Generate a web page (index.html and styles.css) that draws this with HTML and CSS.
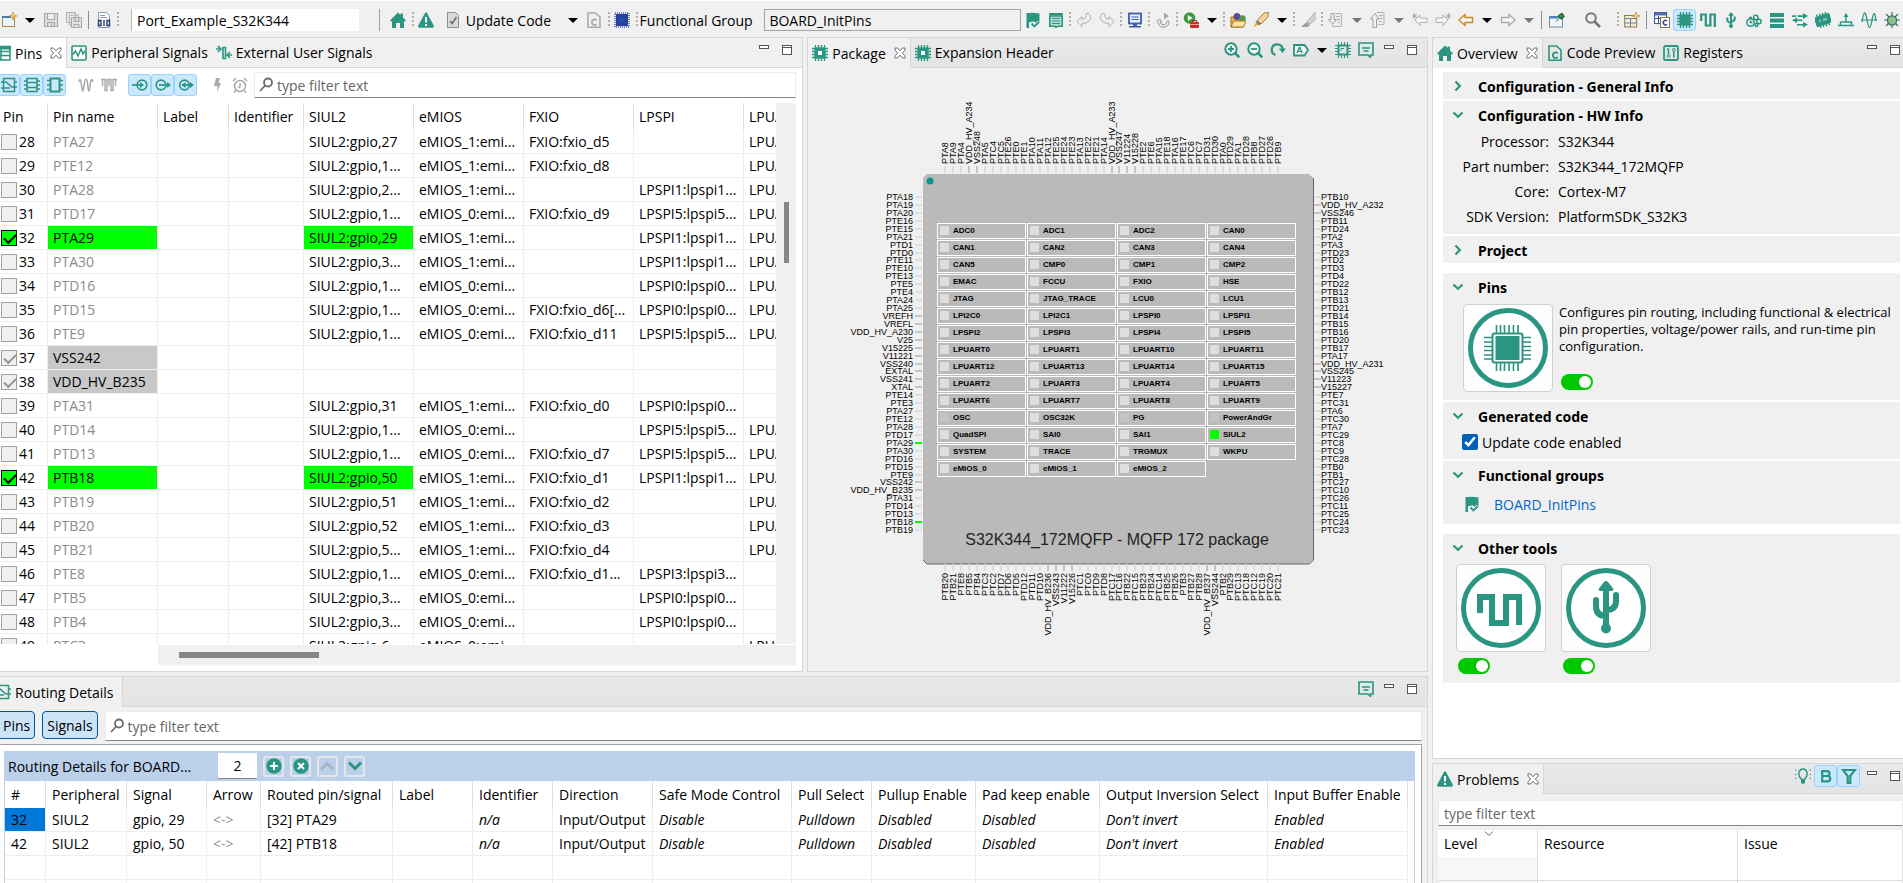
FILE: index.html
```
<!DOCTYPE html>
<html lang="en">
<head>
    <meta charset="UTF-8">
    <meta name="viewport" content="width=device-width, initial-scale=1.0">
    <title>Pins - Port_Example_S32K344</title>
    <link rel="stylesheet" href="styles.css">
</head>
<body>
    <!-- Icon sprite -->
    <svg class="sprite" aria-hidden="true">
        <symbol id="i-new" viewBox="0 0 16 16"><rect x="1.500" y="4.500" width="12" height="10" fill="#eaf6ff" stroke="#b08a3c"/><path d="M1 4h9v2H1z" fill="#4a78b5"/><path d="M12 0l1 3 3 1-3 1-1 3-1-3-3-1 3-1z" fill="#f3cf5b" stroke="#b88a1c" stroke-width=".6"/></symbol>
        <symbol id="i-save" viewBox="0 0 16 16"><path d="M1.500 1.500h13v13h-13zM4.500 1.500v6h7v-6M4.500 14.500v-4h7v4M8.500 11.500v3" fill="#e2e2e2" stroke="#a8a8a8" stroke-width="1.200"/></symbol>
        <symbol id="i-saveall" viewBox="0 0 16 16"><path d="M.5.5h9v10h-9zM3.500 3h9v10h-9z" fill="#e8e8e8" stroke="#b0b0b0"/><path d="M5.500 5.500h10v10h-10zM8 5.500v4h5v-4M8 15.500v-3h5v3" fill="#e2e2e2" stroke="#a8a8a8"/></symbol>
        <symbol id="i-bin" viewBox="0 0 16 16"><path d="M2.500.5h8l3 3v12h-11z" fill="#fff" stroke="#8a9ab5"/><path d="M4 3.500h5M4 5.500h7" stroke="#7f9bd0"/><g fill="none" stroke="#223a78" stroke-width="1.400"><path d="M2.500 8.500h2.500v5H2.500zM8 8v6M11 8.500h2.500v5H11z"/></g></symbol>
        <symbol id="i-home" viewBox="0 0 16 16"><path d="M0 8.500L8 .5l2.500 2.500V1.500h2.500v4L16 8.500l-1.200 1.200-.8-.8V16h-4v-5H6v5H2V8.900l-.8.8z" fill="#2a9580"/></symbol>
        <symbol id="i-warn" viewBox="0 0 16 16"><path d="M7 1q1-1.500 2 0l7 13q0 1.800-1.500 1.800h-13Q0 15.800 0 14z" fill="#2a9580"/><path d="M8 5v5.500M8 12v2" stroke="#fff" stroke-width="2"/></symbol>
        <symbol id="i-update" viewBox="0 0 16 16"><path d="M2.500.5h8l3 3v12h-11z" fill="#d9d9d9" stroke="#8f8f8f"/><path d="M5 9l2.200 2.500L11.500 5" fill="none" stroke="#666" stroke-width="1.400"/></symbol>
        <symbol id="i-cdoc" viewBox="0 0 16 16"><path d="M2 1h7.500L14 5v10.200H2z" fill="none" stroke="currentColor" stroke-width="1.600"/><path d="M10.700 8.300a2.800 2.800 0 1 0 0 3.900" fill="none" stroke="currentColor" stroke-width="1.800"/></symbol>
        <symbol id="i-bluechip" viewBox="0 0 16 16"><path d="M1 1h14v14H1z" fill="none" stroke="#6d7fc4" stroke-width="2" stroke-dasharray="1 1"/><rect x="2" y="2" width="12" height="12" fill="#2c3f97"/><rect x="5" y="5" width="6" height="6" fill="#1d4fae"/></symbol>
        <symbol id="i-flag" viewBox="0 0 16 16"><path d="M1.500 1H4q5-.5 10.500.5V9.500L12 12 9 9.500q-3 0-5 1V16H1.500z" fill="#2a9580"/><path d="M6.500 11.500l3 3 4.500-4.500" fill="none" stroke="#f4f4f4" stroke-width="3.600"/><path d="M6.500 11.500l3 3 4.500-4.500" fill="none" stroke="#2a9580" stroke-width="1.800"/></symbol>
        <symbol id="i-list" viewBox="0 0 16 16"><rect x="1" y="1" width="14" height="2.500" rx="1" fill="#2a9580"/><path d="M1.800 4h12.400v10.200H10L8 15.500l-1-1.300H1.800z" fill="#b9dcd4" stroke="#2a9580" stroke-width="1.600"/><path d="M4 6.500h8M4 9h8M4 11.500h8" stroke="#2a9580"/></symbol>
        <symbol id="i-undo" viewBox="0 0 16 16"><path d="M.8 9.500L6 4.500v2.800Q10.500 7 10 2l2.500-.8Q16.500 5.500 13 9q-2.500 2.500-7 2.500v3z" fill="#efefef" stroke="#b0b0b0"/></symbol>
        <symbol id="i-redo" viewBox="0 0 16 16"><path d="M15.200 9.500L10 4.500v2.800Q5.500 7 6 2l-2.500-.8Q-.5 5.500 3 9q2.500 2.500 7 2.500v3z" fill="#efefef" stroke="#b0b0b0"/></symbol>
        <symbol id="i-monitor" viewBox="0 0 16 16"><rect x="2" y="1.500" width="12" height="10" fill="#e9f0fb" stroke="#3a5fa8" stroke-width="1.800"/><path d="M4.500 5h7M4.500 7.500h7" stroke="#3a5fa8"/><path d="M6 12h4v2h4v1.500H2V14h4z" fill="#3a5fa8"/></symbol>
        <symbol id="i-refresh" viewBox="0 0 16 16"><path d="M9 .5l5 3.500-5 3.500z" fill="#9aa89c"/><path d="M2 9l3-2 1.500 3.500-1.500-.3q1 3 4 2.600t3-3.700h2q.5 5-4.500 6T3 10.500z" fill="#eee" stroke="#999"/></symbol>
        <symbol id="i-run" viewBox="0 0 16 16"><circle cx="6.500" cy="6" r="5.800" fill="#3c9a3c"/><path d="M4.800 3l5 3-5 3z" fill="#fff"/><rect x="7" y="10" width="9" height="6" rx="1" fill="#cc2d28"/><path d="M9.500 10V8.500h4V10" fill="none" stroke="#a01d1a"/><path d="M7 12.500h9" stroke="#f2a09d"/></symbol>
        <symbol id="i-folder" viewBox="0 0 16 16"><path d="M1 5h5v2h8l-1 8H1z" fill="#e8b64c" stroke="#a8761b"/><circle cx="7" cy="4.500" r="3.500" fill="#5b4a96"/><circle cx="12.500" cy="6.500" r="3.200" fill="#4a9a53"/><path d="M3.500 9H16l-2.500 6H1z" fill="#fbe3a0" stroke="#a8761b"/></symbol>
        <symbol id="i-rocket" viewBox="0 0 16 16"><path d="M4 8.500L11 1l4.500-.5L15 5l-7 7z" fill="#f4d49c" stroke="#a77c33"/><path d="M4 8.500l4 3.500-2 1.500L2.500 10z" fill="#7a7a86"/><path d="M3 10.500l2.500 2L.5 15.500z" fill="#f2a724"/></symbol>
        <symbol id="i-brush" viewBox="0 0 16 16"><path d="M15 0v8l-5 4-3-2.500z" fill="#d3d3d3" stroke="#b5b5b5"/><path d="M6.500 10L10 12.500l-2 2.500H1z" fill="#a0a0a0"/></symbol>
        <symbol id="i-docdown" viewBox="0 0 16 16"><path d="M7.500 1.500h6v13h-9V12" fill="#ededed" stroke="#b4b4b4"/><path d="M8 4.500h4M9 7.500h3M10 10.500h2" stroke="#b4b4b4"/><path d="M3 1.500h3v6h2.500l-4 4.500L.5 7.500H3z" fill="#f3f3f3" stroke="#9f9f9f"/></symbol>
        <symbol id="i-docup" viewBox="0 0 16 16"><path d="M7 .5h7v12H8" fill="#ededed" stroke="#b4b4b4"/><path d="M9 3.500h4M9 6.500h4M9 9.500h3" stroke="#b4b4b4"/><path d="M3 15.500V7H.5L5 1.500 9 7H6.500v8.500z" fill="#f3f3f3" stroke="#9f9f9f"/></symbol>
        <symbol id="i-left" viewBox="0 0 16 16"><path d="M1 8l6-5.500v3h7.500v5H7v3z" fill="#f6f6f6" stroke="currentColor" stroke-width="1.300"/></symbol>
        <symbol id="i-right" viewBox="0 0 16 16"><path d="M15 8L9 2.500v3H1.500v5H9v3z" fill="#f6f6f6" stroke="currentColor" stroke-width="1.300"/></symbol>
        <symbol id="i-leftstar" viewBox="0 0 16 16"><path d="M3 8l5-5v3h7v4.500H8v3z" fill="#f6f6f6" stroke="#b0b0b0"/><path d="M2.500 1v6M0 2.500l5 3M5 2.500l-5 3" stroke="#999" stroke-width=".8"/></symbol>
        <symbol id="i-rightstar" viewBox="0 0 16 16"><path d="M13 8L8 3v3H1v4.500h7v3z" fill="#f6f6f6" stroke="#b0b0b0"/><path d="M13.500 1v6M11 2.500l5 3M16 2.500l-5 3" stroke="#999" stroke-width=".8"/></symbol>
        <symbol id="i-pinwin" viewBox="0 0 16 16"><rect x=".5" y="4.500" width="13" height="10.500" fill="#eef5fb" stroke="#7c8aa0"/><path d="M.5 4h13v2.500H.5z" fill="#4d83c4"/><path d="M7 9.500l3-3M9 4l3.500 3.500 3-3L13 1z" fill="#2c8a3e" stroke="#1f5f2c"/></symbol>
        <symbol id="i-search" viewBox="0 0 16 16"><circle cx="6" cy="6" r="4.800" fill="none" stroke="#777" stroke-width="2"/><path d="M9.500 9.500l5.500 5.500" stroke="#777" stroke-width="2.600"/></symbol>
        <symbol id="i-persp" viewBox="0 0 16 16"><rect x=".7" y="3.500" width="12" height="11.500" fill="#f7edd3" stroke="#8c7a4c"/><path d="M1 6.500h11.500M6.500 6.500V15M1 11h11.500" stroke="#6d7fa8"/><path d="M12 0l1 3 3 1-3 1-1 3-1-3-3-1 3-1z" fill="#f6d779" stroke="#a8812a" stroke-width=".6"/></symbol>
        <symbol id="i-cwin" viewBox="0 0 16 16"><rect x=".6" y=".6" width="12" height="11" fill="#fff" stroke="#35508c"/><path d="M1 1h11v2.500H1z" fill="#4a70b8"/><path d="M4.500 4v7M1 6.500h7" stroke="#35508c"/><rect x="6.500" y="5.500" width="9" height="10" fill="#fff" stroke="#8a7340"/><path d="M13 9a2.200 2.200 0 1 0 0 3.200" fill="none" stroke="#2b4c9c" stroke-width="1.500"/></symbol>
        <symbol id="i-chip" viewBox="0 0 16 16"><path d="M3.500 0v16M6.500 0v16M9.500 0v16M12.500 0v16M0 3.500h16M0 6.500h16M0 9.500h16M0 12.500h16" stroke="#2a9580" stroke-width="1.300"/><rect x="2.500" y="2.500" width="11" height="11" rx="1" fill="#2a9580"/></symbol>
        <symbol id="i-chiphole" viewBox="0 0 16 16"><path d="M3.500 0v16M6.500 0v16M9.500 0v16M12.500 0v16M0 3.500h16M0 6.500h16M0 9.500h16M0 12.500h16" stroke="#2a9580" stroke-width="1.300"/><rect x="2.500" y="2.500" width="11" height="11" rx="1.500" fill="#2a9580"/><rect x="6" y="6" width="4" height="4" fill="#fff"/></symbol>
        <symbol id="i-chiprot" viewBox="0 0 16 16"><path d="M3.500 0v16M6.500 0v16M9.500 0v16M12.500 0v16M0 3.500h16M0 6.500h16M0 9.500h16M0 12.500h16" stroke="#2a9580"/><rect x="3.500" y="3.500" width="9" height="9" fill="#e6e6e6" stroke="#2a9580" stroke-width="2"/><path d="M6 9V6.500h3" fill="none" stroke="#2a9580"/></symbol>
        <symbol id="i-wave" viewBox="0 0 16 16"><path d="M1.200 9V2.500h4.600v11h4.600v-11h4.400V15" fill="none" stroke="#2a9580" stroke-width="2.200"/></symbol>
        <symbol id="i-usb" viewBox="0 0 16 16"><path d="M8 3v10M4.300 5.500V8q.2 2.300 3.700 2.800M11.700 4.500V7q-.2 2.300-3.700 2.800" fill="none" stroke="#2a9580" stroke-width="2"/><path d="M8 0l3 3.800H5z" fill="#2a9580"/><circle cx="8" cy="14" r="2" fill="#2a9580"/></symbol>
        <symbol id="i-clocks" viewBox="0 0 16 16"><g fill="none" stroke="#2a9580" stroke-width="1.500"><circle cx="4.500" cy="10.500" r="3.700"/><circle cx="9.800" cy="5.500" r="2.200"/><circle cx="13" cy="9.500" r="2.200"/><circle cx="10.500" cy="13" r="1.500"/><path d="M3 5.500h3M4.500 8.500v2h2"/></g></symbol>
        <symbol id="i-bars" viewBox="0 0 16 16"><path d="M1 1h14v4H1zM1 6.500h14v4H1zM1 12h14v4H1z" fill="#2a9580"/></symbol>
        <symbol id="i-swap" viewBox="0 0 16 16"><path d="M11 1l5 3-5 3V5H6L5 3.200h6zM5 5.500v2h5.500V9H5v2L0 8.200zM11 10l5 2.500-5 3v-2H5V12h6zM0 3.300h4V5H0z" fill="#2a9580"/></symbol>
        <symbol id="i-chiptilt" viewBox="0 0 16 16"><g transform="rotate(-18 8 8)"><path d="M3.500 1v14M6.500 1v14M9.500 1v14M12.500 1v14" stroke="#2a9580" stroke-width="1.500"/><rect x="0" y="3" width="16" height="10" fill="#2a9580"/><path d="M4 8h2M8 8h4" stroke="#8fc7bb" stroke-width="2"/></g></symbol>
        <symbol id="i-ddr" viewBox="0 0 16 16"><path d="M0 13.500h16M2.500 10h11v3.500M2.500 10v3.500M8 4v6" fill="none" stroke="#2a9580" stroke-width="1.400"/><path d="M8 1l2.500 4h-5z" fill="#2a9580"/></symbol>
        <symbol id="i-sine" viewBox="0 0 16 16"><path d="M0 8h16" stroke="#2a9580"/><path d="M1 10Q3.500-7 6 8t5 0Q13.500-5 15 9" fill="none" stroke="#2a9580" stroke-width="1.300"/></symbol>
        <symbol id="i-bug" viewBox="0 0 16 16"><path d="M2 2l12 12M14 2L2 14M0 8h16M8 0v16" stroke="#35706a" stroke-width="1.200"/><circle cx="8" cy="8.500" r="4.600" fill="#8fbf8a" stroke="#35706a" stroke-width="1.200"/></symbol>
        <symbol id="i-x" viewBox="0 0 12 12"><path d="M1 1h2.500L6 3.800 8.500 1H11v2.200L8.300 6 11 8.800V11H8.500L6 8.200 3.500 11H1V8.800L3.700 6 1 3.200z" fill="#fff" stroke="#6e6e6e"/></symbol>
        <symbol id="i-min" viewBox="0 0 12 12"><rect x="1.500" y="1.500" width="9" height="3" fill="#fff" stroke="#555"/></symbol>
        <symbol id="i-max" viewBox="0 0 12 12"><rect x="1.500" y="1.500" width="9" height="9" fill="#fff" stroke="#555"/><path d="M1 3.500h10" stroke="#555"/></symbol>
        <symbol id="i-table" viewBox="0 0 16 16"><path d="M1 1.500h14v13.500H1zM1 6.500h14M1 10.500h14M6 3v12" fill="#fff" stroke="#2a9580" stroke-width="1.500"/><path d="M0 1h16v3.500H0z" fill="#2a9580"/></symbol>
        <symbol id="i-graph" viewBox="0 0 16 16"><rect x="1" y="1" width="14" height="14" rx="1" fill="#fff" stroke="#2a9580" stroke-width="1.600"/><path d="M2 9.500l2.500-3.500 2.500 5 3-7 2 5 2-3" fill="none" stroke="#2a9580" stroke-width="1.500"/></symbol>
        <symbol id="i-ext" viewBox="0 0 16 16"><path d="M0 4h3.500M2 1l3 3-3 3M7 2.500v11h2.500v-11zM11.500 10H16M14 7l-3 3 3 3" fill="none" stroke="#2a9580" stroke-width="1.600"/></symbol>
        <symbol id="i-regs" viewBox="0 0 16 16"><rect x="1" y="1" width="14" height="14" rx="1.500" fill="none" stroke="#2a9580" stroke-width="1.800"/><path d="M5.500 3.500v6M10.800 6v6.500M4 4.500L5.500 3.500" fill="none" stroke="#2a9580" stroke-width="1.500"/><circle cx="5.500" cy="11" r="1.400" fill="none" stroke="#2a9580"/><circle cx="10.800" cy="4.800" r="1.400" fill="none" stroke="#2a9580"/></symbol>
        <symbol id="i-route" viewBox="0 0 16 16"><path d="M2.500 1.500h11v13h-11zM0 5h5l6 5h5M0 11h9M0 5h3M13 5h3" fill="none" stroke="#2a9580" stroke-width="1.500"/></symbol>
        <symbol id="i-pkg2" viewBox="0 0 16 16"><path d="M3 1.500h10v13H3zM0 4h3M0 8h3M0 12h3M13 4h3M13 8h3M13 12h3M3 5.500h10M3 10.500h10" fill="none" stroke="#2a9580" stroke-width="1.600"/></symbol>
        <symbol id="i-pkg3" viewBox="0 0 16 16"><path d="M3.500 1.500h9v13h-9z" fill="none" stroke="#2a9580" stroke-width="2"/><path d="M0 3.500h3M0 8h3M0 12.500h3M13 3.500h3M13 8h3M13 12.500h3" stroke="#2a9580" stroke-width="1.500"/></symbol>
        <symbol id="i-analog" viewBox="0 0 16 16"><path d="M1 5q1-5 2 0l1 7q.7 4 1.400 0l1.400-8q1.200-4 2.400 0l1 8q.7 4 1.400 0l1.200-8q1-3.500 2.200 1" fill="none" stroke="#aaa" stroke-width="1.500"/></symbol>
        <symbol id="i-digital" viewBox="0 0 16 16"><path d="M0 2.500h4v11h2v-11h4v11h2v-11h4M1.500 3v6M8 3v6M14.500 3v6" fill="none" stroke="#aaa" stroke-width="1.400"/></symbol>
        <symbol id="i-in" viewBox="0 0 16 16"><circle cx="10" cy="8" r="4.800" fill="none" stroke="#2a9580" stroke-width="1.700"/><path d="M0 8h9" stroke="#2a9580" stroke-width="1.700"/><path d="M8 5l4 3-4 3z" fill="#2a9580"/></symbol>
        <symbol id="i-out" viewBox="0 0 16 16"><circle cx="6" cy="8" r="4.800" fill="none" stroke="#2a9580" stroke-width="1.700"/><path d="M4 8h10" stroke="#2a9580" stroke-width="1.700"/><path d="M12 5l4 3-4 3z" fill="#2a9580"/></symbol>
        <symbol id="i-inout" viewBox="0 0 16 16"><circle cx="6.500" cy="8" r="4.800" fill="none" stroke="#2a9580" stroke-width="1.700"/><path d="M4 8h10" stroke="#2a9580" stroke-width="1.700"/><path d="M12 5l4 3-4 3zM7.500 5l-4 3 4 3z" fill="#2a9580"/></symbol>
        <symbol id="i-bolt" viewBox="0 0 16 16"><path d="M7 1h4L9.500 6H12l-4 9 .5-6H5z" fill="#aaa"/></symbol>
        <symbol id="i-alarm" viewBox="0 0 16 16"><circle cx="8" cy="9" r="5.500" fill="none" stroke="#aaa" stroke-width="1.500"/><path d="M8 6v3.500L6 11M1 4l3-3M15 4l-3-3M3.500 13.500L2 15.500M12.500 13.500l1.500 2" fill="none" stroke="#aaa" stroke-width="1.500"/></symbol>
        <symbol id="i-lens" viewBox="0 0 16 16"><circle cx="10" cy="5.500" r="4" fill="none" stroke="#6a6a6a" stroke-width="1.800"/><path d="M7.200 8.500L2 14" stroke="#6a6a6a" stroke-width="1.800"/></symbol>
        <symbol id="i-zoomin" viewBox="0 0 16 16"><circle cx="7" cy="7" r="5.700" fill="#f4f4f4" stroke="#2a9580" stroke-width="2"/><path d="M4 7h6M7 4v6" stroke="#2a9580" stroke-width="1.800"/><path d="M11 11l4.300 4.300" stroke="#2a9580" stroke-width="2.600"/></symbol>
        <symbol id="i-zoomout" viewBox="0 0 16 16"><circle cx="7" cy="7" r="5.700" fill="#f4f4f4" stroke="#2a9580" stroke-width="2"/><path d="M4 7h6" stroke="#2a9580" stroke-width="1.800"/><path d="M11 11l4.300 4.300" stroke="#2a9580" stroke-width="2.600"/></symbol>
        <symbol id="i-rotate" viewBox="0 0 16 16"><path d="M5.500 13A5.500 5.500 0 1 1 12.700 7" fill="none" stroke="#2a9580" stroke-width="2.200"/><path d="M8.800 6.500H16L12.400 11z" fill="#2a9580"/></symbol>
        <symbol id="i-tag" viewBox="0 0 16 16"><path d="M1 3h10.500L15 8l-3.500 5.500H1z" fill="#f4f4f4" stroke="#2a9580" stroke-width="1.800"/><path d="M4 11l2.300-5.500h.6L9 11M5 9.300h3.200" fill="none" stroke="#2a9580" stroke-width="1.300"/></symbol>
        <symbol id="i-note" viewBox="0 0 16 16"><path d="M1 1h14v12h-2.500v2.500L10 13H1z" fill="#dcece8" stroke="#2a9580" stroke-width="1.600"/><path d="M4 6h8M5.500 9h5" stroke="#2a9580" stroke-width="1.600"/></symbol>
        <symbol id="i-bulb" viewBox="0 0 16 16"><path d="M6.500 11.500Q3.600 8.500 3.800 5.500 4.500 1 8 1t4.200 4.500q.2 3-2.700 6z" fill="none" stroke="#2a9580" stroke-width="1.400"/><path d="M6 11h4v4l-2 1-2-1z" fill="#2a9580"/><path d="M0 1.500l1.500 1M0 6.500h1.500M0 11l1.500-1M16 1.500l-1.500 1M16 6.500h-1.500M16 11l-1.500-1" stroke="#2a9580"/></symbol>
        <symbol id="i-b" viewBox="0 0 16 16"><path d="M4.200 3.200h4.600q2.800.2 2.800 2.300T9 8H4.500 9.300q3 .2 3 2.700t-3 2.600H4.200z" fill="none" stroke="#2a9580" stroke-width="2.200"/></symbol>
        <symbol id="i-funnel" viewBox="0 0 16 16"><path d="M2 2h12L9.300 8v7H6.700V8z" fill="#cce8ff" stroke="#2a9580" stroke-width="2.200"/></symbol>
        <symbol id="i-down" viewBox="0 0 12 12"><path d="M1.500 3.500L6 7.800l4.500-4.300" fill="none" stroke="currentColor" stroke-width="2.200"/></symbol>
        <symbol id="i-add" viewBox="0 0 16 16"><circle cx="8" cy="8" r="7.700" fill="#2a9580"/><path d="M8 4v8M4 8h8" stroke="#fff" stroke-width="2"/></symbol>
        <symbol id="i-del" viewBox="0 0 16 16"><circle cx="8" cy="8" r="7.700" fill="#2a9580"/><path d="M5 5l6 6M11 5l-6 6" stroke="#fff" stroke-width="2"/></symbol>
    </svg>

    <div class="toolbar" id="mainToolbar">
        <button class="tool" aria-label="New"><svg><use href="#i-new"/></svg></button>
        <button class="arrow" aria-label="New menu"></button>
        <button class="tool" aria-label="Save"><svg><use href="#i-save"/></svg></button>
        <button class="tool" aria-label="Save all"><svg><use href="#i-saveall"/></svg></button>
        <i class="sep"></i>
        <button class="tool" aria-label="Binary"><svg><use href="#i-bin"/></svg></button>
        <i class="dots"></i>
        <select class="project-select" aria-label="Project"><option>Port_Example_S32K344</option></select>
        <button class="tool" aria-label="Home"><svg><use href="#i-home"/></svg></button>
        <i class="dots"></i>
        <button class="tool" aria-label="Problems"><svg><use href="#i-warn"/></svg></button>
        <button class="text-tool"><svg><use href="#i-update"/></svg>Update Code</button>
        <button class="arrow" aria-label="Update menu"></button>
        <button class="tool grey" aria-label="Code"><svg><use href="#i-cdoc"/></svg></button>
        <i class="dots"></i>
        <button class="tool" aria-label="Processor"><svg><use href="#i-bluechip"/></svg></button>
        <i class="dots"></i>
        <label class="group-label" for="groupSelect">Functional Group</label>
        <select class="group-select" id="groupSelect"><option>BOARD_InitPins</option></select>
        <button class="tool" aria-label="Called from default init"><svg><use href="#i-flag"/></svg></button>
        <button class="tool" aria-label="Group properties"><svg><use href="#i-list"/></svg></button>
        <i class="dots"></i>
        <button class="tool" aria-label="Undo"><svg><use href="#i-undo"/></svg></button>
        <button class="tool" aria-label="Redo"><svg><use href="#i-redo"/></svg></button>
        <i class="dots"></i>
        <button class="tool" aria-label="Console"><svg><use href="#i-monitor"/></svg></button>
        <i class="dots"></i>
        <button class="tool" aria-label="Restart"><svg><use href="#i-refresh"/></svg></button>
        <i class="dots"></i>
        <button class="tool" aria-label="Run"><svg><use href="#i-run"/></svg></button>
        <button class="arrow" aria-label="Run menu"></button>
        <i class="dots"></i>
        <button class="tool" aria-label="Open element"><svg><use href="#i-folder"/></svg></button>
        <button class="tool" aria-label="Launch"><svg><use href="#i-rocket"/></svg></button>
        <button class="arrow" aria-label="Launch menu"></button>
        <i class="dots"></i>
        <button class="tool" aria-label="Mark"><svg><use href="#i-brush"/></svg></button>
        <i class="dots"></i>
        <button class="tool" aria-label="Next annotation"><svg><use href="#i-docdown"/></svg></button>
        <button class="arrow dim" aria-label="Next menu"></button>
        <button class="tool" aria-label="Previous annotation"><svg><use href="#i-docup"/></svg></button>
        <button class="arrow dim" aria-label="Previous menu"></button>
        <button class="tool" aria-label="Last edit"><svg><use href="#i-leftstar"/></svg></button>
        <button class="tool" aria-label="Next edit"><svg><use href="#i-rightstar"/></svg></button>
        <button class="tool gold" aria-label="Back"><svg><use href="#i-left"/></svg></button>
        <button class="arrow" aria-label="Back menu"></button>
        <button class="tool grey" aria-label="Forward"><svg><use href="#i-right"/></svg></button>
        <button class="arrow dim" aria-label="Forward menu"></button>
        <i class="sep"></i>
        <button class="tool" aria-label="Pin editor"><svg><use href="#i-pinwin"/></svg></button>
        <button class="tool spaced" aria-label="Search"><svg><use href="#i-search"/></svg></button>
        <i class="dots"></i>
        <button class="tool" aria-label="Open perspective"><svg><use href="#i-persp"/></svg></button>
        <i class="sep"></i>
        <button class="tool" aria-label="C/C++"><svg><use href="#i-cwin"/></svg></button>
        <button class="tool on" aria-label="Pins"><svg><use href="#i-chip"/></svg></button>
        <button class="tool" aria-label="Clocks"><svg><use href="#i-wave"/></svg></button>
        <button class="tool" aria-label="Peripherals"><svg><use href="#i-usb"/></svg></button>
        <button class="tool" aria-label="GTM"><svg><use href="#i-clocks"/></svg></button>
        <button class="tool" aria-label="IVT"><svg><use href="#i-bars"/></svg></button>
        <button class="tool" aria-label="QuadSPI"><svg><use href="#i-swap"/></svg></button>
        <button class="tool" aria-label="DCD"><svg><use href="#i-chiptilt"/></svg></button>
        <button class="tool" aria-label="DDR"><svg><use href="#i-ddr"/></svg></button>
        <button class="tool" aria-label="eFUSE"><svg><use href="#i-sine"/></svg></button>
        <button class="tool" aria-label="Debug"><svg><use href="#i-bug"/></svg></button>
    </div>

    <div class="workspace">
        <div class="main-col">
            <div class="top-row">
                <!-- Pins view -->
                <section class="view pins-view">
                    <div class="tabs light">
                        <button class="tab active first"><svg><use href="#i-table"/></svg>Pins<svg class="close"><use href="#i-x"/></svg></button>
                        <button class="tab"><svg><use href="#i-graph"/></svg>Peripheral Signals</button>
                        <button class="tab"><svg><use href="#i-ext"/></svg>External User Signals</button>
                        <div class="view-tools">
                            <button class="win" aria-label="Minimize"><svg><use href="#i-min"/></svg></button>
                            <button class="win" aria-label="Maximize"><svg><use href="#i-max"/></svg></button>
                        </div>
                    </div>
                    <div class="pin-tools">
                        <div class="tool-set edge">
                            <button class="tool on" aria-label="Show routed"><svg><use href="#i-route"/></svg></button>
                            <button class="tool on" aria-label="Show dedicated"><svg><use href="#i-pkg2"/></svg></button>
                            <button class="tool on" aria-label="Show package"><svg><use href="#i-pkg3"/></svg></button>
                        </div>
                        <div class="tool-set">
                            <button class="tool" aria-label="Analog"><svg><use href="#i-analog"/></svg></button>
                            <button class="tool" aria-label="Digital"><svg><use href="#i-digital"/></svg></button>
                        </div>
                        <div class="tool-set">
                            <button class="tool on" aria-label="Inputs"><svg><use href="#i-in"/></svg></button>
                            <button class="tool on" aria-label="Outputs"><svg><use href="#i-out"/></svg></button>
                            <button class="tool on" aria-label="Bidirectional"><svg><use href="#i-inout"/></svg></button>
                        </div>
                        <div class="tool-set">
                            <button class="tool" aria-label="Power"><svg><use href="#i-bolt"/></svg></button>
                            <button class="tool" aria-label="Clock"><svg><use href="#i-alarm"/></svg></button>
                        </div>
                        <div class="filter">
                            <svg><use href="#i-lens"/></svg>
                            <input type="text" placeholder="type filter text" aria-label="Filter pins">
                        </div>
                    </div>
                    <div class="pin-body">
                        <div class="pin-scroll">
                            <table class="pin-table">
                                <colgroup><col class="c-pin"><col class="c-sig"><col class="c-label"><col class="c-ident"><col class="c-sig"><col class="c-sig"><col class="c-sig"><col class="c-sig"><col class="c-sig"></colgroup>
                                <thead>
                                    <tr><th>Pin</th><th>Pin name</th><th>Label</th><th>Identifier</th><th>SIUL2</th><th>eMIOS</th><th>FXIO</th><th>LPSPI</th><th>LPUART</th></tr>
                                </thead>
                                <tbody id="pinRows"></tbody>
                            </table>
                        </div>
                        <div class="vbar"><div class="vthumb"></div></div>
                    </div>
                    <div class="hbar"><div class="hthumb"></div></div>
                </section>

                <!-- Package view -->
                <section class="view package-view">
                    <div class="tabs">
                        <button class="tab active"><svg><use href="#i-chiphole"/></svg>Package<svg class="close"><use href="#i-x"/></svg></button>
                        <button class="tab"><svg><use href="#i-chiphole"/></svg>Expansion Header</button>
                        <div class="view-tools">
                            <button class="tool" aria-label="Zoom in"><svg><use href="#i-zoomin"/></svg></button>
                            <button class="tool" aria-label="Zoom out"><svg><use href="#i-zoomout"/></svg></button>
                            <button class="tool" aria-label="Rotate"><svg><use href="#i-rotate"/></svg></button>
                            <button class="tool" aria-label="Labels"><svg><use href="#i-tag"/></svg></button>
                            <button class="arrow" aria-label="Labels menu"></button>
                            <button class="tool" aria-label="Switch package"><svg><use href="#i-chiprot"/></svg></button>
                            <button class="tool" aria-label="Legend"><svg><use href="#i-note"/></svg></button>
                            <button class="win" aria-label="Minimize"><svg><use href="#i-min"/></svg></button>
                            <button class="win" aria-label="Maximize"><svg><use href="#i-max"/></svg></button>
                        </div>
                    </div>
                    <div class="package-body">
                        <svg class="package" id="package" viewBox="0 0 560 560"></svg>
                    </div>
                </section>
            </div>

            <!-- Routing details -->
            <section class="view routing-view">
                <div class="tabs">
                    <button class="tab active first"><svg><use href="#i-route"/></svg>Routing Details</button>
                    <div class="view-tools">
                        <button class="tool" aria-label="Legend"><svg><use href="#i-note"/></svg></button>
                        <button class="win" aria-label="Minimize"><svg><use href="#i-min"/></svg></button>
                        <button class="win" aria-label="Maximize"><svg><use href="#i-max"/></svg></button>
                    </div>
                </div>
                <div class="routing-tools">
                    <button class="toggle-btn cut">Pins</button>
                    <button class="toggle-btn">Signals</button>
                    <div class="filter">
                        <svg><use href="#i-lens"/></svg>
                        <input type="text" placeholder="type filter text" aria-label="Filter routing">
                    </div>
                </div>
                <div class="routing-box">
                    <div class="routing-head">
                        <span class="routing-title">Routing Details for BOARD...</span>
                        <input class="count" type="text" value="2" aria-label="Row count">
                        <button class="mini" aria-label="Add"><svg><use href="#i-add"/></svg></button>
                        <button class="mini" aria-label="Remove"><svg><use href="#i-del"/></svg></button>
                        <button class="mini up" aria-label="Move up"><svg><use href="#i-down"/></svg></button>
                        <button class="mini" aria-label="Move down"><svg><use href="#i-down"/></svg></button>
                    </div>
                    <div class="routing-scroll">
                        <table class="routing-table">
                            <colgroup><col class="r1"><col class="r2"><col class="r3"><col class="r4"><col class="r5"><col class="r3"><col class="r3"><col class="r6"><col class="r7"><col class="r3"><col class="r8"><col class="r9"><col class="r10"><col class="r11"></colgroup>
                            <thead>
                                <tr><th>#</th><th>Peripheral</th><th>Signal</th><th>Arrow</th><th>Routed pin/signal</th><th>Label</th><th>Identifier</th><th>Direction</th><th>Safe Mode Control</th><th>Pull Select</th><th>Pullup Enable</th><th>Pad keep enable</th><th>Output Inversion Select</th><th>Input Buffer Enable</th></tr>
                            </thead>
                            <tbody>
                                <tr><td class="selected">32</td><td>SIUL2</td><td>gpio, 29</td><td class="dir">&lt;-&gt;</td><td>[32] PTA29</td><td></td><td><em>n/a</em></td><td>Input/Output</td><td><em>Disable</em></td><td><em>Pulldown</em></td><td><em>Disabled</em></td><td><em>Disabled</em></td><td><em>Don't invert</em></td><td><em>Enabled</em></td></tr>
                                <tr><td>42</td><td>SIUL2</td><td>gpio, 50</td><td class="dir">&lt;-&gt;</td><td>[42] PTB18</td><td></td><td><em>n/a</em></td><td>Input/Output</td><td><em>Disable</em></td><td><em>Pulldown</em></td><td><em>Disabled</em></td><td><em>Disabled</em></td><td><em>Don't invert</em></td><td><em>Enabled</em></td></tr>
                                <tr><td></td><td></td><td></td><td></td><td></td><td></td><td></td><td></td><td></td><td></td><td></td><td></td><td></td><td></td></tr>
                                <tr><td></td><td></td><td></td><td></td><td></td><td></td><td></td><td></td><td></td><td></td><td></td><td></td><td></td><td></td></tr>
                            </tbody>
                        </table>
                    </div>
                </div>
            </section>
        </div>

        <div class="side-col">
            <!-- Overview -->
            <section class="view overview-view">
                <div class="tabs">
                    <button class="tab active"><svg><use href="#i-home"/></svg>Overview<svg class="close"><use href="#i-x"/></svg></button>
                    <button class="tab teal"><svg><use href="#i-cdoc"/></svg>Code Preview</button>
                    <button class="tab"><svg><use href="#i-regs"/></svg>Registers</button>
                    <div class="view-tools">
                        <button class="win" aria-label="Minimize"><svg><use href="#i-min"/></svg></button>
                        <button class="win" aria-label="Maximize"><svg><use href="#i-max"/></svg></button>
                    </div>
                </div>
                <div class="overview-body">
                    <div class="section closed">
                        <h2><svg><use href="#i-down"/></svg>Configuration - General Info</h2>
                    </div>
                    <div class="section">
                        <h2><svg><use href="#i-down"/></svg>Configuration - HW Info</h2>
                        <dl class="hw-info">
                            <dt>Processor:</dt><dd>S32K344</dd>
                            <dt>Part number:</dt><dd>S32K344_172MQFP</dd>
                            <dt>Core:</dt><dd>Cortex-M7</dd>
                            <dt>SDK Version:</dt><dd>PlatformSDK_S32K3</dd>
                        </dl>
                    </div>
                    <div class="section closed">
                        <h2><svg><use href="#i-down"/></svg>Project</h2>
                    </div>
                    <div class="section apart">
                        <h2><svg><use href="#i-down"/></svg>Pins</h2>
                        <div class="pins-info">
                            <button class="big-tool" aria-label="Pins tool">
                                <svg viewBox="0 0 80 80">
                                    <circle cx="40" cy="40" r="37.500" fill="#fff" stroke="#2a9580" stroke-width="5"/>
                                    <path d="M28.500 17v46M32.500 17v46M36.500 17v46M41 17v46M45.500 17v46M50 17v46M16 29.500h47M16 34h47M16 38.500h47M16 42.500h47M16 47h47M16 51h47" stroke="#2a9580" stroke-width="1.600"/>
                                    <rect x="24.500" y="25.500" width="30" height="29" rx="2" fill="#fff" stroke="#2a9580" stroke-width="2"/>
                                    <rect x="27.500" y="28" width="24" height="24" fill="#2a9580"/>
                                </svg>
                            </button>
                            <div class="pins-text">
                                <p>Configures pin routing, including functional &amp; electrical pin properties, voltage/power rails, and run-time pin configuration.</p>
                                <input class="switch" type="checkbox" checked aria-label="Pins enabled">
                            </div>
                        </div>
                    </div>
                    <div class="section code">
                        <h2><svg><use href="#i-down"/></svg>Generated code</h2>
                        <label class="check-row"><input type="checkbox" checked>Update code enabled</label>
                    </div>
                    <div class="section groups">
                        <h2><svg><use href="#i-down"/></svg>Functional groups</h2>
                        <div class="group-row"><svg><use href="#i-flag"/></svg><a href="#">BOARD_InitPins</a></div>
                    </div>
                    <div class="section apart">
                        <h2><svg><use href="#i-down"/></svg>Other tools</h2>
                        <div class="other-tools">
                            <div class="other-tool">
                                <button class="big-tool" aria-label="Clocks tool">
                                    <svg viewBox="0 0 80 80">
                                        <circle cx="40" cy="40" r="37.500" fill="#fff" stroke="#2a9580" stroke-width="5"/>
                                        <path d="M19 45V29h12v26h14V29h13v28" fill="none" stroke="#2a9580" stroke-width="6"/>
                                    </svg>
                                </button>
                                <input class="switch" type="checkbox" checked aria-label="Clocks enabled">
                            </div>
                            <div class="other-tool">
                                <button class="big-tool" aria-label="Peripherals tool">
                                    <svg viewBox="0 0 80 80">
                                        <circle cx="40" cy="40" r="37.500" fill="#fff" stroke="#2a9580" stroke-width="5"/>
                                        <path d="M40 20v40M30 32v6q0 10 10 10M50 27v6q0 9-10 9" fill="none" stroke="#2a9580" stroke-width="6" stroke-linecap="round"/>
                                        <path d="M38 14q2-2 4 0l5.500 7q0 2-2 2h-11q-2 0-2-2z" fill="#2a9580"/>
                                        <circle cx="40" cy="60.500" r="5" fill="#2a9580"/>
                                    </svg>
                                </button>
                                <input class="switch" type="checkbox" checked aria-label="Peripherals enabled">
                            </div>
                        </div>
                    </div>
                </div>
            </section>

            <!-- Problems -->
            <section class="view problems-view">
                <div class="tabs">
                    <button class="tab active"><svg><use href="#i-warn"/></svg>Problems<svg class="close"><use href="#i-x"/></svg></button>
                    <div class="view-tools">
                        <button class="tool" aria-label="Hints"><svg><use href="#i-bulb"/></svg></button>
                        <button class="tool on" aria-label="Basic"><svg><use href="#i-b"/></svg></button>
                        <button class="tool on" aria-label="Filters"><svg><use href="#i-funnel"/></svg></button>
                        <button class="win" aria-label="Minimize"><svg><use href="#i-min"/></svg></button>
                        <button class="win" aria-label="Maximize"><svg><use href="#i-max"/></svg></button>
                    </div>
                </div>
                <div class="problems-body">
                    <div class="filter">
                        <input type="text" placeholder="type filter text" aria-label="Filter problems">
                    </div>
                    <table class="problems-table">
                        <colgroup><col class="p1"><col class="p2"><col></colgroup>
                        <thead>
                            <tr><th>Level<svg class="sort" viewBox="0 0 10 6"><path d="M1 .5l4 4 4-4" fill="none" stroke="#666"/></svg></th><th>Resource</th><th>Issue</th></tr>
                        </thead>
                        <tbody>
                            <tr><td class="sorted"></td><td></td><td></td></tr>
                            <tr><td class="sorted"></td><td></td><td></td></tr>
                        </tbody>
                    </table>
                </div>
            </section>
        </div>
    </div>

    <script src="script.js"></script>
</body>
</html>
```
FILE: styles.css
```
* {
    box-sizing: border-box;
    margin: 0;
    padding: 0;
}

body {
    display: flex;
    flex-direction: column;
    height: 100vh;
    overflow: hidden;
    background: #f0f0f0;
    color: #000;
    font-family: "Open Sans", "Noto Sans", sans-serif;
    font-size: 14px;
}

button,
input,
select {
    font: inherit;
    color: inherit;
    border: none;
    background: none;
}

.sprite {
    display: none;
}

/* Toolbar */

.toolbar {
    display: flex;
    flex: none;
    align-items: center;
    height: 37px;
    margin-left: -3px;
    padding-top: 2px;
    border-top: 1px solid #fff;
    white-space: nowrap;
}

.tool {
    display: flex;
    flex: none;
    align-items: center;
    justify-content: center;
    width: 23px;
    height: 22px;
    border: 1px solid transparent;
    border-radius: 3px;
}

.tool svg,
.text-tool svg,
.filter svg {
    width: 16px;
    height: 16px;
    flex: none;
}

.tool.on {
    background: #cce8ff;
    border-color: #99d1ff;
}

.tool.grey {
    color: #aaa;
}

.tool.gold {
    color: #c8891c;
}

.tool.spaced {
    margin: 0 11px 0 13px;
}

.arrow {
    display: flex;
    flex: none;
    justify-content: center;
    width: 19px;
}

.arrow::before {
    content: "";
    border: 5px solid transparent;
    border-top-color: #000;
    border-bottom: none;
}

.arrow.dim::before {
    border-top-color: #777;
}

.sep {
    flex: none;
    width: 1px;
    height: 18px;
    margin: 0 3px;
    background: #8c8c8c;
}

.dots {
    flex: none;
    width: 2px;
    height: 16px;
    margin: 0 1px 0 2px;
    background: repeating-linear-gradient(#b3b0a8 0 2px, transparent 2px 4px);
}

.project-select {
    appearance: none;
    width: 251px;
    height: 22px;
    margin: 0 7px 0 11px;
    padding: 0 5px;
    background: linear-gradient(#f0f0f0, #f0f0f0) right / 20px 100% no-repeat #fff;
    border-left: 1px solid #bbb;
    border-right: 1px solid #a0a0a0;
}

.text-tool {
    display: flex;
    align-items: center;
    gap: 5px;
    width: 120px;
    margin-left: 7px;
}

.group-label {
    width: 127px;
    padding-left: 1px;
}

.group-select {
    appearance: none;
    width: 259px;
    height: 22px;
    padding: 0 4px;
    border: 1px solid #a5a5a5;
}

/* Views */

.workspace {
    display: flex;
    flex: 1;
    gap: 4px;
    min-height: 0;
}

.main-col {
    flex: 1428;
    display: flex;
    flex-direction: column;
    gap: 4px;
    min-width: 0;
}

.side-col {
    flex: 471;
    display: flex;
    flex-direction: column;
    gap: 4px;
    min-width: 0;
}

.top-row {
    flex: 636;
    display: flex;
    gap: 4px;
    min-height: 0;
}

.view {
    display: flex;
    flex-direction: column;
    min-width: 0;
    min-height: 0;
    overflow: hidden;
    border: 1px solid #d6d6d6;
}

.pins-view {
    flex: 804;
    background: #fff;
    border-left: none;
}

.package-view {
    flex: 620;
}

.routing-view {
    flex: 206;
    border-left: none;
    border-bottom: none;
}

.overview-view {
    flex: 723;
    background: #fff;
    border-right: none;
}

.problems-view {
    flex: 119;
    border-right: none;
    border-bottom: none;
}

.tabs {
    display: flex;
    flex: none;
    height: 30px;
    background: linear-gradient(#e9e9e9, #e3e3e3);
    border-bottom: 1px solid #d6d6d6;
    white-space: nowrap;
}

.tabs.light {
    background: #f0f0f0;
}

.tab {
    display: flex;
    align-items: center;
    gap: 4px;
    padding: 0 4px;
}

.tab svg {
    width: 16px;
    height: 16px;
    flex: none;
}

.tab .close {
    width: 12px;
    height: 12px;
    margin-left: 4px;
}

.tab.active {
    height: 30px;
    background: #f0f0f0;
    border-right: 1px solid #d6d6d6;
}

.light .tab.active {
    background: #fff;
}

.tab.first {
    margin-left: -9px;
}

.routing-view .tab.first {
    padding-right: 8px;
}

.tab.teal svg {
    color: #2a9580;
}

.view-tools {
    display: flex;
    align-items: center;
    height: 24px;
    margin-left: auto;
    padding-right: 4px;
}

.side-col .view-tools {
    margin-right: -3px;
    padding-right: 0;
}

.win {
    display: flex;
    justify-content: center;
    width: 23px;
}

.win svg {
    width: 12px;
    height: 12px;
}

.filter {
    display: flex;
    flex: 1;
    align-items: center;
    background: #fff;
    border: 1px solid #ececec;
    border-bottom: 1px solid #868686;
}

.filter svg {
    margin-left: 3px;
}

.filter input {
    flex: 1;
    min-width: 0;
    height: 100%;
    padding-left: 3px;
    outline: none;
}

.filter input::placeholder {
    color: #666;
}

/* Pins */

.pin-tools {
    display: flex;
    flex: none;
    align-items: center;
    gap: 8px;
    padding: 4px 6px 5px 0;
}

.tool-set {
    display: flex;
}

.tool-set.edge {
    margin-left: -3px;
}

.pin-tools .filter {
    height: 26px;
    margin-left: -5px;
}

.pin-body {
    display: flex;
    flex: 1;
    min-height: 0;
    margin-right: 6px;
}

.pin-scroll {
    flex: 1;
    min-width: 0;
    overflow: hidden;
}

.vbar {
    width: 20px;
    background: #f0f0f0;
}

.vthumb {
    width: 5px;
    height: 61px;
    margin: 99px auto 0;
    background: #868686;
}

.hbar {
    display: flex;
    flex: none;
    align-items: center;
    height: 20px;
    margin: 1px 6px 6px 158px;
    background: #f0f0f0;
}

.hthumb {
    width: 140px;
    height: 6px;
    margin-left: 21px;
    background: #868686;
}

table {
    border-collapse: separate;
    border-spacing: 0;
    table-layout: fixed;
}

th,
td {
    height: 24px;
    padding: 0 5px;
    overflow: hidden;
    text-align: left;
    font-weight: normal;
    line-height: 22px;
    white-space: nowrap;
    border-right: 1px solid #eee;
    border-bottom: 1px solid #eee;
}

th {
    height: 27px;
    border-right-color: #ddd;
    border-bottom: none;
}

.pin-table {
    width: 854px;
}

.c-pin {
    width: 48px;
}

.c-sig {
    width: 110px;
}

.c-label {
    width: 71px;
}

.c-ident {
    width: 75px;
}

.pin-table th:first-child {
    padding-left: 3px;
}

.pin-table td:first-child {
    padding: 0 0 0 1px;
}

.pin-table label {
    display: flex;
    align-items: center;
    gap: 2px;
}

.pin-table input {
    appearance: none;
    display: grid;
    width: 16px;
    height: 16px;
    background: #f0f0f0;
    border: 1px solid #a0a0a0;
}

.pin-table input:checked::before {
    content: "";
    width: 10px;
    height: 5px;
    margin: 3px 0 0 2px;
    border: solid #999;
    border-width: 0 0 2px 2px;
    transform: rotate(-45deg);
}

.pin-table .routed input {
    background: #0f0;
    border-color: #000;
}

.pin-table .routed input:checked::before {
    border-color: #000;
}

.name {
    color: #8c8c8c;
}

.routed .name,
.routed .siul {
    color: #000;
    background: #0f0;
}

.power .name {
    color: #000;
    background: #c8c8c8;
}

/* Package */

.package-body {
    display: flex;
    flex: 1;
    align-items: center;
    justify-content: center;
    min-height: 0;
    overflow: hidden;
}

.package {
    flex: none;
    width: 560px;
    height: 560px;
    font-family: "Liberation Sans", Arial, sans-serif;
    font-size: 9px;
}

.package rect {
    shape-rendering: crispEdges;
}

.end {
    text-anchor: end;
}

.periph-name {
    font-size: 8px;
    font-weight: bold;
}

.package-name {
    font-size: 16px;
    text-anchor: middle;
    fill: #222;
}

/* Routing details */

.routing-tools {
    display: flex;
    flex: none;
    gap: 7px;
    padding: 4px 5px 3px 0;
}

.routing-tools .filter {
    height: 30px;
}

.toggle-btn {
    height: 28px;
    padding: 0 4px;
    background: #cce4f7;
    border: 1px solid #0054a0;
    border-radius: 4px;
}

.toggle-btn.cut {
    margin-left: -4px;
    padding-left: 6px;
}

.routing-box {
    flex: 1;
    min-height: 0;
    margin-right: 5px;
    padding: 6px 6px 0 4px;
    overflow: hidden;
    background: #fff;
    border: 1px solid #a0a0a0;
    border-width: 1px 1px 0 0;
}

.routing-head {
    display: flex;
    align-items: center;
    gap: 6px;
    height: 30px;
    padding-left: 4px;
    background: #bbd0ea;
}

.routing-title {
    width: 204px;
}

.count {
    width: 39px;
    height: 26px;
    text-align: center;
    background: #fff;
    border-bottom: 1px solid #868686;
}

.mini {
    display: flex;
    align-items: center;
    justify-content: center;
    width: 21px;
    height: 21px;
    color: #2a9580;
    border: 2px solid #e6e6e6;
    border-radius: 3px;
}

.mini svg {
    width: 16px;
    height: 16px;
    flex: none;
}

.mini.up {
    color: #a9b4c2;
    transform: rotate(180deg);
}

.routing-scroll {
    overflow: hidden;
    border: solid #bbd0ea;
    border-width: 0 1px;
}

.routing-table {
    width: 1403px;
}

.routing-table th,
.routing-table td {
    padding: 0 0 0 6px;
}

.r1 { width: 41px; }
.r2 { width: 81px; }
.r3 { width: 80px; }
.r4 { width: 54px; }
.r5 { width: 132px; }
.r6 { width: 100px; }
.r7 { width: 139px; }
.r8 { width: 104px; }
.r9 { width: 124px; }
.r10 { width: 168px; }
.r11 { width: 140px; }

.routing-table td.selected {
    background: #0078d7;
}

.dir {
    color: #999;
}

/* Overview */

.overview-body {
    flex: 1;
    padding: 4px 3px 0 10px;
    overflow: hidden;
}

.section {
    margin-bottom: 2px;
    padding: 2px 0 1px 9px;
    background: #f0f0f0;
}

.section.apart {
    margin-top: 10px;
}

.section h2 {
    display: flex;
    align-items: center;
    gap: 14px;
    height: 24px;
    font-family: "Noto Sans", "Open Sans", sans-serif;
    font-size: 14px;
    font-weight: bold;
}

.section h2 svg {
    width: 12px;
    height: 12px;
    color: #2a9580;
}

.section.closed h2 svg {
    transform: rotate(-90deg);
}

.hw-info {
    display: grid;
    grid-template-columns: 97px 1fr;
    column-gap: 9px;
    padding: 2px 0 4px;
    line-height: 25px;
}

.hw-info dt {
    text-align: right;
}

.pins-info {
    display: flex;
    gap: 6px;
    padding: 5px 0 7px 11px;
}

.big-tool {
    display: flex;
    flex: none;
    align-items: center;
    justify-content: center;
    width: 90px;
    height: 88px;
    background: #fdfdfd;
    border: 1px solid #cfcfcf;
    border-radius: 4px;
}

.big-tool svg {
    width: 80px;
    height: 80px;
}

.pins-text p {
    height: 70px;
    font-size: 13px;
    line-height: 17px;
}

.switch {
    appearance: none;
    display: flex;
    justify-content: flex-end;
    width: 32px;
    height: 16px;
    margin-left: 2px;
    padding: 2px;
    background: #00c800;
    border-radius: 8px;
}

.switch::before {
    content: "";
    width: 12px;
    height: 12px;
    background: #fff;
    border-radius: 50%;
}

.code {
    height: 57px;
}

.check-row {
    display: flex;
    align-items: center;
    gap: 4px;
    height: 28px;
    padding-left: 10px;
}

.check-row input {
    width: 16px;
    height: 16px;
    accent-color: #0060b8;
}

.groups {
    height: 63px;
}

.group-row {
    display: flex;
    align-items: center;
    gap: 14px;
    height: 34px;
    padding-left: 12px;
}

.group-row svg {
    width: 16px;
    height: 16px;
}

.group-row a {
    color: #0066cc;
    text-decoration: none;
}

.other-tools {
    display: flex;
    gap: 15px;
    padding: 4px 0 8px 4px;
}

.other-tool .switch {
    margin-top: 6px;
}

/* Problems */

.problems-body {
    flex: 1;
    padding: 6px 0 0 5px;
    overflow: hidden;
}

.problems-body .filter {
    height: 26px;
    margin-bottom: 4px;
}

.problems-body .filter input {
    padding-left: 5px;
}

.problems-table {
    width: 100%;
    background: #fff;
}

.problems-table th {
    position: relative;
    padding: 0 6px;
}

.problems-table td {
    border-color: #ddd;
}

.p1 {
    width: 100px;
}

.p2 {
    width: 200px;
}

.problems-table td.sorted {
    background: #f7f7f7;
}

.sort {
    position: absolute;
    top: 1px;
    left: 46px;
    width: 10px;
    height: 6px;
}
```
FILE: script.js
```
// pin, name, SIUL2, eMIOS, FXIO, LPSPI, LPUART
const pins = [
    [28, 'PTA27', '27', 1, 'd5', '', 1],
    [29, 'PTE12', '1...', 1, 'd8', '', 1],
    [30, 'PTA28', '2...', 1, '', 1, 1],
    [31, 'PTD17', '1...', 0, 'd9', 5, 1],
    [32, 'PTA29', '29', 1, '', 1, 1],
    [33, 'PTA30', '3...', 1, '', 1, 1],
    [34, 'PTD16', '1...', 0, '', 0, 1],
    [35, 'PTD15', '1...', 0, 'd6[...', 0, 1],
    [36, 'PTE9', '1...', 0, 'd11', 5, 1],
    [37, 'VSS242'],
    [38, 'VDD_HV_B235'],
    [39, 'PTA31', '31', 1, 'd0', 0, 0],
    [40, 'PTD14', '1...', 0, '', 5, 1],
    [41, 'PTD13', '1...', 0, 'd7', 5, 1],
    [42, 'PTB18', '50', 1, 'd1', 1, 1],
    [43, 'PTB19', '51', 1, 'd2', '', 1],
    [44, 'PTB20', '52', 1, 'd3', '', 1],
    [45, 'PTB21', '5...', 1, 'd4', '', 1],
    [46, 'PTE8', '1...', 0, 'd1...', 3, 0],
    [47, 'PTB5', '3...', 0, '', 0, 0],
    [48, 'PTB4', '3...', 0, '', 0, 0],
    [49, 'PTC3', '6...', 0, '', '', 1]
];

const routed = ['PTA29', 'PTB18'];

document.getElementById('pinRows').innerHTML = pins.map(([no, name, siul, emios, fxio, lpspi, lpuart]) => {
    const power = siul === undefined;
    const on = routed.includes(name);
    const cls = power ? 'power' : on ? 'routed' : '';
    return `<tr class="${cls}">
        <td><label><input type="checkbox" ${power || on ? 'checked' : ''} ${power ? 'disabled' : ''}>${no}</label></td>
        <td class="name">${name}</td><td></td><td></td>
        <td class="siul">${power ? '' : 'SIUL2:gpio,' + siul}</td>
        <td>${power ? '' : 'eMIOS_' + emios + ':emi...'}</td>
        <td>${fxio ? 'FXIO:fxio_' + fxio : ''}</td>
        <td>${power || lpspi === '' ? '' : 'LPSPI' + lpspi + ':lpspi' + lpspi + '...'}</td>
        <td>${lpuart ? 'LPUART' : ''}</td>
    </tr>`;
}).join('');

// Package drawing
const sides = {
    top: 'PTA8 PTA9 PTA4 VDD_HV_A234 VSS248 PTA5 PTC4 PTC5 PTE26 PTE0 PTE1 PTA10 PTA11 PTA12 PTE25 PTE24 PTE23 PTA13 PTE22 PTE21 PTA14 VDD_HV_A233 VSS247 V11224 V15228 PTE2 PTE6 PTA15 PTE18 PTA16 PTE17 PTC6 PTC7 PTD31 PTD30 PTA0 PTD29 PTA1 PTD28 PTB8 PTD27 PTD26 PTB9',
    left: 'PTA18 PTA19 PTA20 PTE16 PTE15 PTA21 PTD1 PTD0 PTE11 PTE10 PTE13 PTE5 PTE4 PTA24 PTA25 VREFH VREFL VDD_HV_A230 V25 V15225 V11221 VSS240 EXTAL VSS241 XTAL PTE14 PTE3 PTA27 PTE12 PTA28 PTD17 PTA29 PTA30 PTD16 PTD15 PTE9 VSS242 VDD_HV_B235 PTA31 PTD14 PTD13 PTB18 PTB19',
    right: 'PTB10 VDD_HV_A232 VSS246 PTB11 PTD24 PTA2 PTA3 PTD23 PTD2 PTD3 PTD4 PTD22 PTB12 PTB13 PTD21 PTB14 PTB15 PTB16 PTD20 PTB17 PTA17 VDD_HV_A231 VSS245 V11223 V15227 PTE7 PTC31 PTA6 PTC30 PTA7 PTC29 PTC8 PTC9 PTC28 PTB0 PTB1 PTC27 PTC10 PTC26 PTC11 PTC25 PTC24 PTC23',
    bottom: 'PTB20 PTB21 PTE8 PTB5 PTB4 PTC3 PTC2 PTD7 PTD6 PTD5 PTD12 PTD11 PTD10 VDD_HV_B236 VSS243 V11222 V15226 PTC1 PTC0 PTD9 PTD8 PTC17 PTC16 PTB22 PTC15 PTB23 PTB24 PTC14 PTB25 PTB26 PTB3 PTB27 PTB28 VDD_HV_B237 VSS244 PTB2 PTB29 PTC13 PTC18 PTC12 PTC19 PTC20 PTC21'
};

const blocks = ['ADC0', 'ADC1', 'ADC2', 'CAN0', 'CAN1', 'CAN2', 'CAN3', 'CAN4', 'CAN5', 'CMP0', 'CMP1', 'CMP2',
    'EMAC', 'FCCU', 'FXIO', 'HSE', 'JTAG', 'JTAG_TRACE', 'LCU0', 'LCU1', 'LPI2C0', 'LPI2C1', 'LPSPI0', 'LPSPI1',
    'LPSPI2', 'LPSPI3', 'LPSPI4', 'LPSPI5', 'LPUART0', 'LPUART1', 'LPUART10', 'LPUART11',
    'LPUART12', 'LPUART13', 'LPUART14', 'LPUART15', 'LPUART2', 'LPUART3', 'LPUART4', 'LPUART5',
    'LPUART6', 'LPUART7', 'LPUART8', 'LPUART9', 'OSC', 'OSC32K', 'PG', 'PowerAndGr',
    'QuadSPI', 'SAI0', 'SAI1', 'SIUL2', 'SYSTEM', 'TRACE', 'TRGMUX', 'WKPU', 'eMIOS_0', 'eMIOS_1', 'eMIOS_2'];

function pinColor(name) {
    if (routed.includes(name)) return '#0f0';
    return name.startsWith('PT') ? '#dedede' : '#c4c4c4';
}

let svg = '<path d="M89 84h382l4 4v382l-4 4H89l-4-4V88z" fill="#bababa"/>' +
    '<path d="M475.500 88v382l-4 4H89l-4-4" fill="none" stroke="#666"/>' +
    '<circle cx="92" cy="91" r="3.500" fill="#0a9494"/>';

for (let i = 0; i < 43; i++) {
    const p = Math.round(107 + i * 7.93);
    const [t, l, r, b] = ['top', 'left', 'right', 'bottom'].map(s => sides[s].split(' ')[i]);
    svg += `<rect x="${p - 1}" y="76" width="2" height="7" fill="${pinColor(t)}"/>
        <text transform="translate(${p + 3} 74) rotate(-90)">${t}</text>
        <rect x="${p - 1}" y="474" width="2" height="7" fill="${pinColor(b)}"/>
        <text class="end" transform="translate(${p + 3} 483) rotate(-90)">${b}</text>
        <rect x="77" y="${p - 1}" width="7" height="2" fill="${pinColor(l)}"/>
        <text class="end" x="75" y="${p + 3}">${l}</text>
        <rect x="476" y="${p - 1}" width="7" height="2" fill="${pinColor(r)}"/>
        <text x="483" y="${p + 3}">${r}</text>`;
}

blocks.forEach((name, i) => {
    const x = 99 + (i % 4) * 90;
    const y = 133 + Math.floor(i / 4) * 17;
    let fill = '#dedede';
    if (name === 'SIUL2') fill = '#0f0';
    if (['OSC', 'PG', 'PowerAndGr'].includes(name)) fill = '#c4c4c4';
    svg += `<rect x="${x}" y="${y}" width="88" height="15" fill="none" stroke="#fff"/>
        <rect x="${x + 3}" y="${y + 3}" width="9" height="9" fill="${fill}"/>
        <text class="periph-name" x="${x + 16}" y="${y + 10}">${name}</text>`;
});

svg += '<text class="package-name" x="279" y="455">S32K344_172MQFP - MQFP 172 package</text>';
document.getElementById('package').innerHTML = svg;
```
